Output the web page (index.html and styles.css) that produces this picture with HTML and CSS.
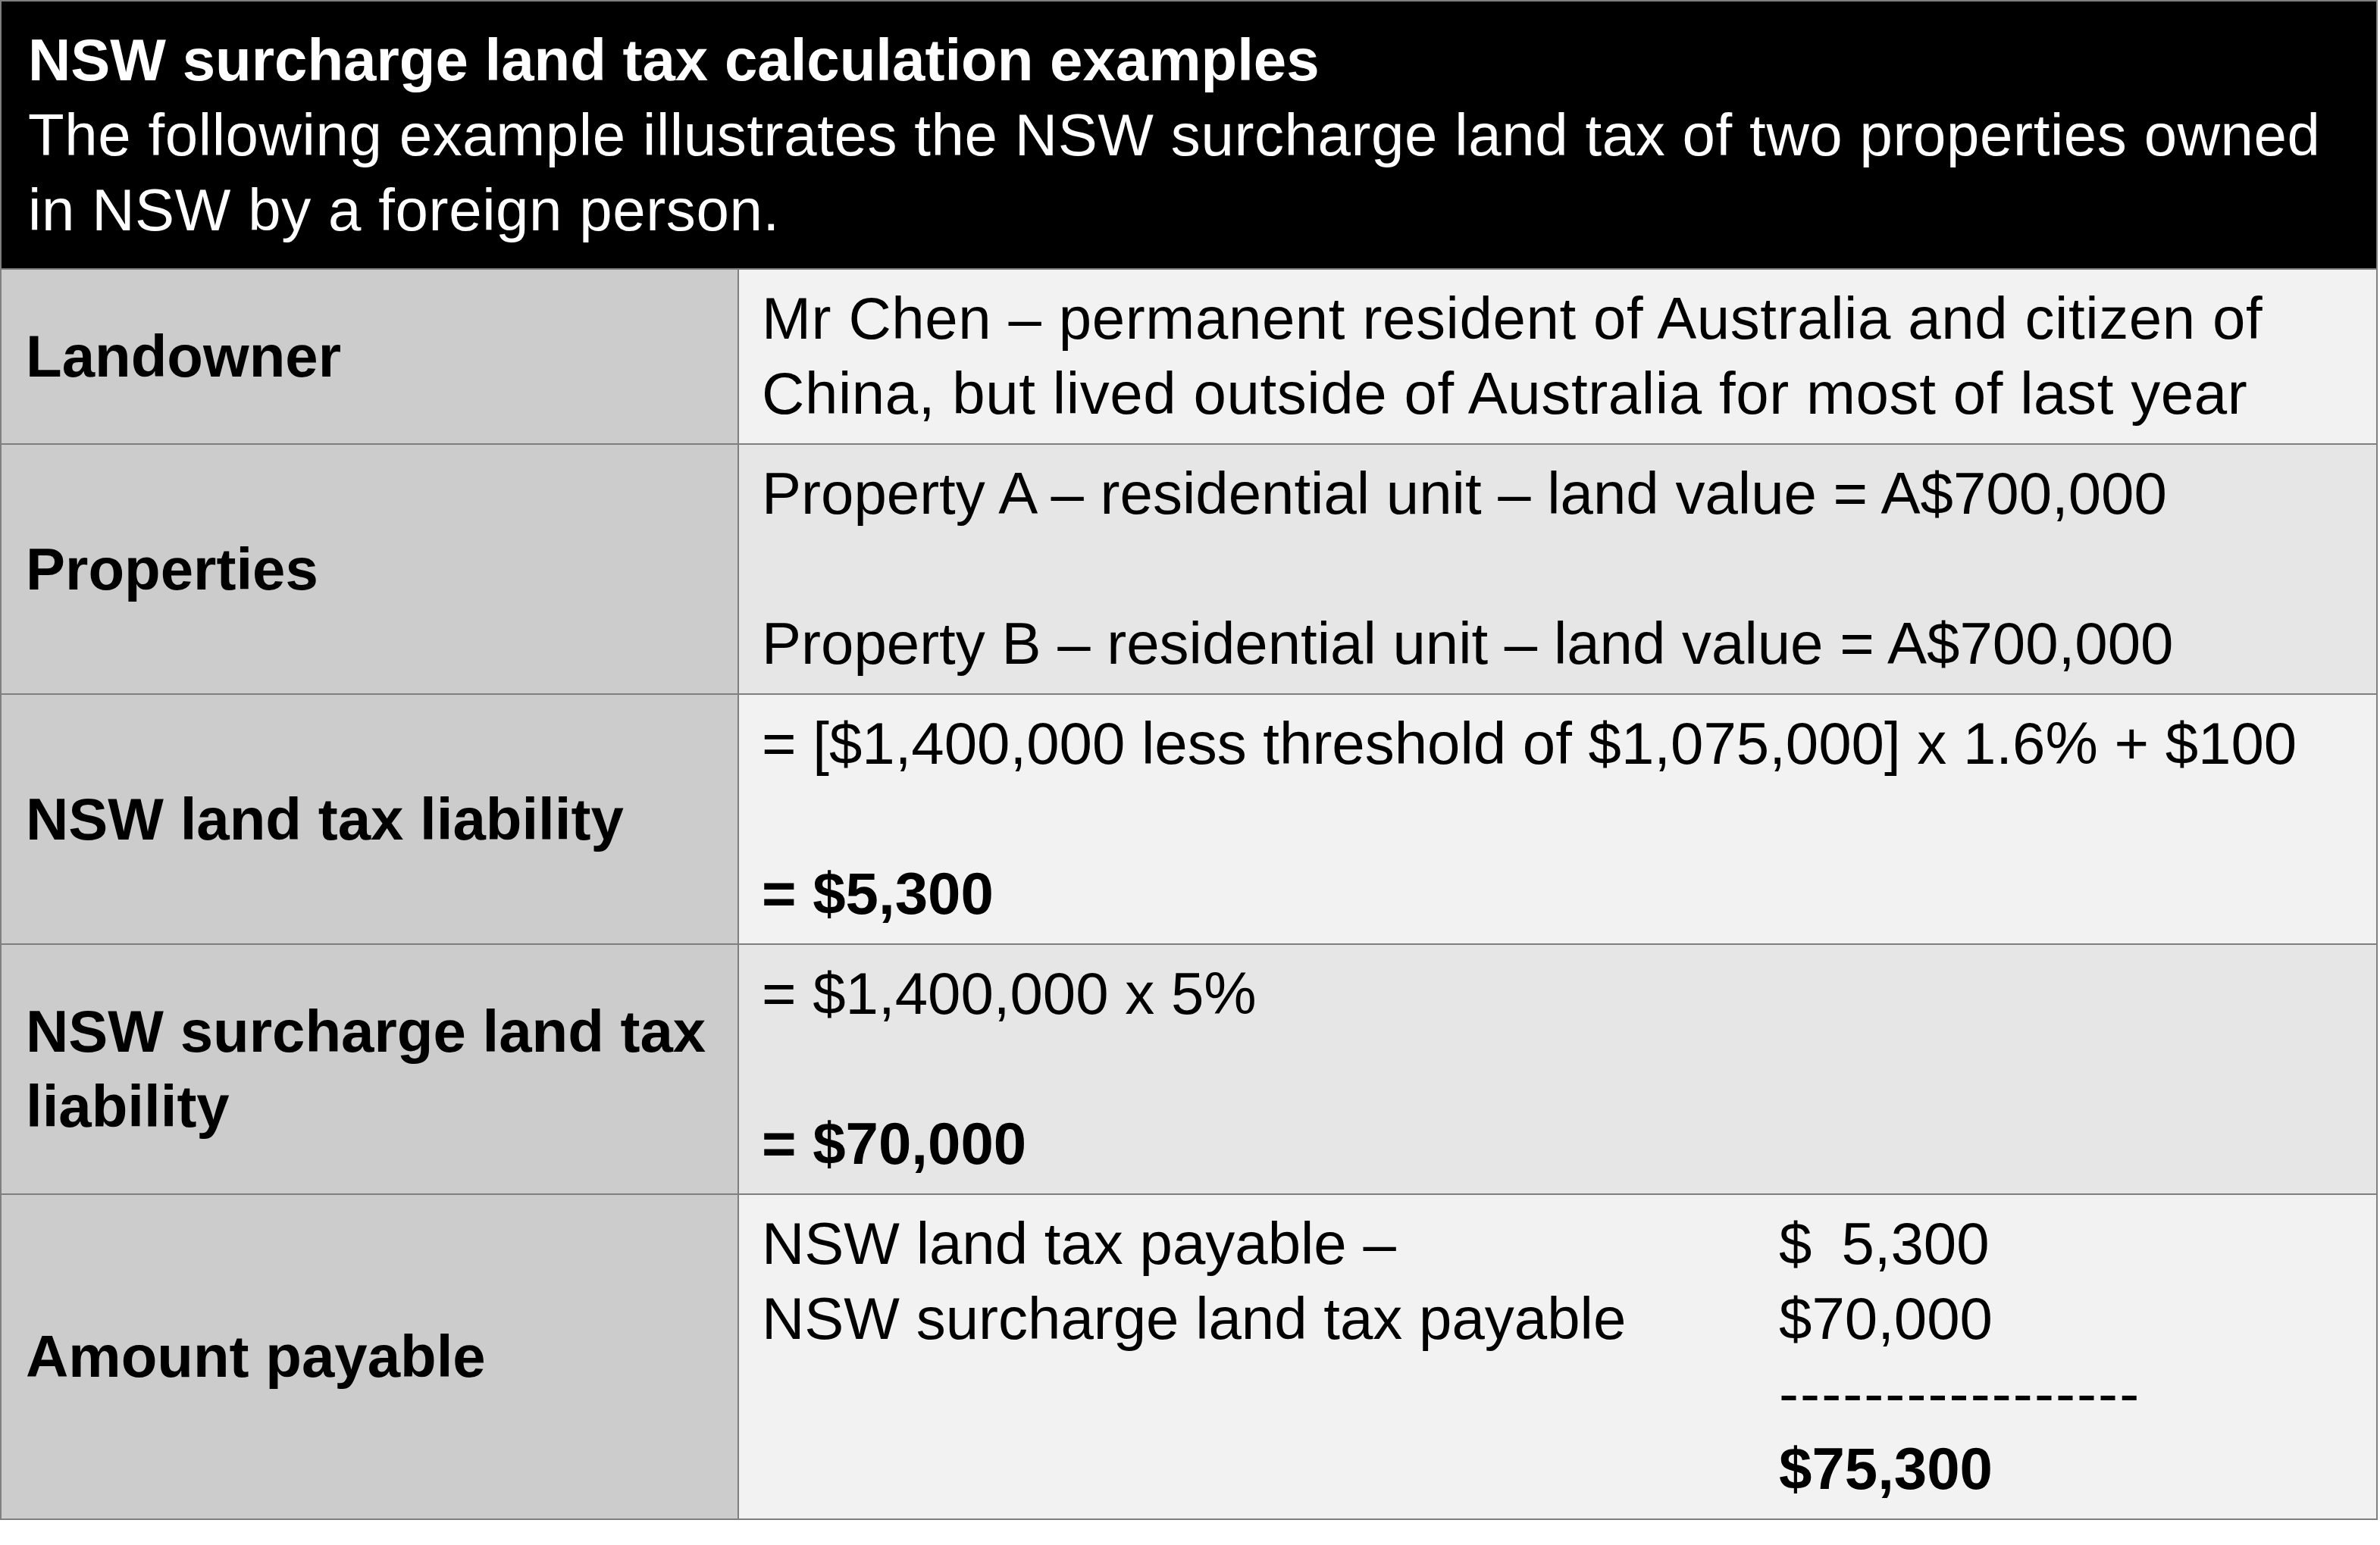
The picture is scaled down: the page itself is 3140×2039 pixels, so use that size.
FILE: index.html
```html
<!DOCTYPE html>
<html lang="en">
<head>
<meta charset="utf-8">
<title>NSW surcharge land tax calculation examples</title>
<link rel="stylesheet" href="styles.css">
</head>
<body>
<div class="calc">
  <div class="head">
    <div class="head-title">NSW surcharge land tax calculation examples</div>
    <div class="head-line">The following example illustrates the NSW surcharge land tax of two properties owned</div>
    <div class="head-line">in NSW by a foreign person.</div>
  </div>

  <div class="label">Landowner</div>
  <div class="value shade-light">
    <div class="line wide">Mr Chen – permanent resident of Australia and citizen of</div>
    <div class="line wide">China, but lived outside of Australia for most of last year</div>
  </div>

  <div class="label">Properties</div>
  <div class="value shade-dark">
    <div class="line">Property A – residential unit – land value = A$700,000</div>
    <div class="line">&nbsp;</div>
    <div class="line">Property B – residential unit – land value = A$700,000</div>
  </div>

  <div class="label">NSW land tax liability</div>
  <div class="value shade-light">
    <div class="line">= [$1,400,000 less threshold of $1,075,000] x 1.6% + $100</div>
    <div class="line">&nbsp;</div>
    <div class="line strong">= $5,300</div>
  </div>

  <div class="label">
    <div>
      <div class="line">NSW surcharge land tax</div>
      <div class="line">liability</div>
    </div>
  </div>
  <div class="value shade-dark">
    <div class="line">= $1,400,000 x 5%</div>
    <div class="line">&nbsp;</div>
    <div class="line strong">= $70,000</div>
  </div>

  <div class="label">Amount payable</div>
  <div class="value shade-light">
    <div class="sums">
      <div class="line">NSW land tax payable –</div>
      <div class="line">$&ensp;5,300</div>
      <div class="line">NSW surcharge land tax payable</div>
      <div class="line">$70,000</div>
      <div class="line">&nbsp;</div>
      <div class="line dashes">-----------------</div>
      <div class="line">&nbsp;</div>
      <div class="line strong">$75,300</div>
    </div>
  </div>
</div>
</body>
</html>
```
FILE: styles.css
```css
html, body {
  margin: 0;
  padding: 0;
  background: #ffffff;
}

body {
  font-family: "Liberation Sans", Arial, sans-serif;
  font-size: 78px;
  color: #000000;
}

.calc {
  width: 3137px;
  box-sizing: border-box;
  border: 2px solid #7f7f7f;
  display: grid;
  grid-template-columns: 973px 1fr;
}

.head {
  grid-column: 1 / -1;
  background: #000000;
  color: #ffffff;
  padding: 28px 20px 27px 35px;
  line-height: 99px;
  white-space: nowrap;
}

.head-title {
  font-weight: bold;
}

.head-line {
  letter-spacing: 0.6px;
}

.label {
  background: #cccccc;
  border-top: 2px solid #7f7f7f;
  border-right: 2px solid #7f7f7f;
  display: flex;
  align-items: center;
  padding-left: 32px;
  font-weight: bold;
  line-height: 99px;
  white-space: nowrap;
}

.value {
  border-top: 2px solid #7f7f7f;
  padding: 15px 20px 16px 30px;
  line-height: 99px;
  white-space: nowrap;
}

.wide {
  letter-spacing: 0.6px;
}

.shade-light {
  background: #f2f2f2;
}

.shade-dark {
  background: #e6e6e6;
}

.strong {
  font-weight: bold;
}

.sums {
  display: grid;
  grid-template-columns: 1342px auto;
}

.dashes {
  letter-spacing: 2.1px;
}
```
